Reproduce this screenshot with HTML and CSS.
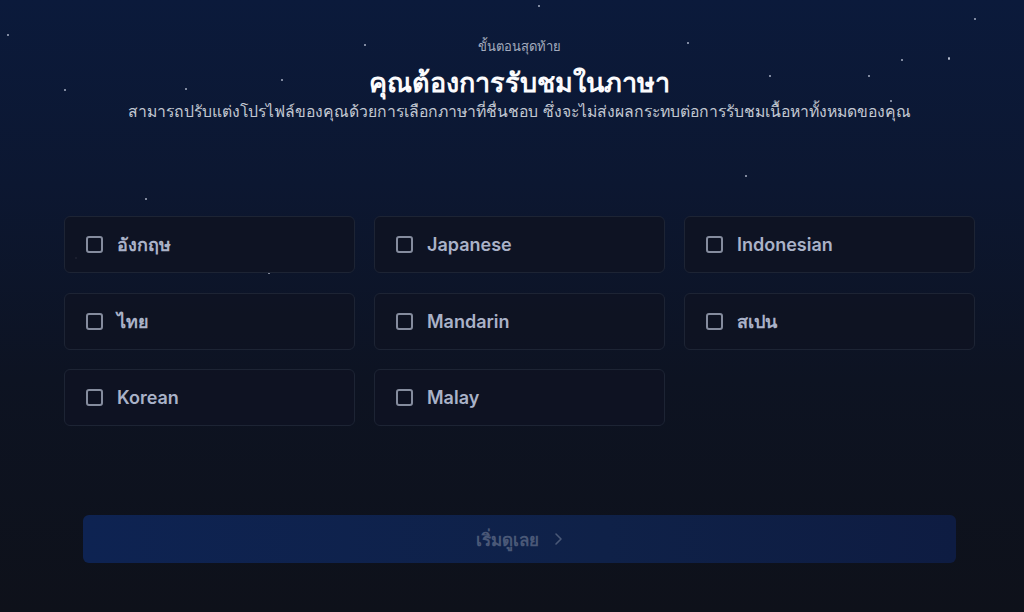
FILE: index.html
```html
<!DOCTYPE html>
<html lang="th">
<head>
    <meta charset="UTF-8">
    <meta name="viewport" content="width=device-width, initial-scale=1.0">
    <title>เลือกภาษา</title>
    <link rel="stylesheet" href="styles.css">
</head>
<body>
    <div class="stars">
        <span class="star" style="left:7px;top:34px"></span>
        <span class="star" style="left:538px;top:5px"></span>
        <span class="star" style="left:974px;top:18px"></span>
        <span class="star" style="left:687px;top:42px"></span>
        <span class="star" style="left:364px;top:44px"></span>
        <span class="star" style="left:948px;top:57px"></span>
        <span class="star" style="left:64px;top:89px"></span>
        <span class="star" style="left:185px;top:88px"></span>
        <span class="star" style="left:281px;top:79px"></span>
        <span class="star" style="left:901px;top:59px"></span>
        <span class="star" style="left:868px;top:75px"></span>
        <span class="star" style="left:948px;top:58px"></span>
        <span class="star" style="left:769px;top:75px"></span>
        <span class="star" style="left:890px;top:100px"></span>
        <span class="star" style="left:745px;top:175px"></span>
        <span class="star" style="left:145px;top:198px"></span>
        <span class="star" style="left:75px;top:257px"></span>
        <span class="star" style="left:268px;top:272px"></span>
    </div>

    <main class="page">
        <header class="intro">
            <div class="step">ขั้นตอนสุดท้าย</div>
            <h1>คุณต้องการรับชมในภาษา</h1>
            <p class="subtitle">สามารถปรับแต่งโปรไฟล์ของคุณด้วยการเลือกภาษาที่ชื่นชอบ ซึ่งจะไม่ส่งผลกระทบต่อการรับชมเนื้อหาทั้งหมดของคุณ</p>
        </header>

        <div class="lang-grid">
            <label class="lang"><input type="checkbox"><span class="box"></span><span>อังกฤษ</span></label>
            <label class="lang"><input type="checkbox"><span class="box"></span><span>Japanese</span></label>
            <label class="lang"><input type="checkbox"><span class="box"></span><span>Indonesian</span></label>
            <label class="lang"><input type="checkbox"><span class="box"></span><span>ไทย</span></label>
            <label class="lang"><input type="checkbox"><span class="box"></span><span>Mandarin</span></label>
            <label class="lang"><input type="checkbox"><span class="box"></span><span>สเปน</span></label>
            <label class="lang"><input type="checkbox"><span class="box"></span><span>Korean</span></label>
            <label class="lang"><input type="checkbox"><span class="box"></span><span>Malay</span></label>
        </div>

        <button class="start" disabled>
            เริ่มดูเลย
            <svg width="10" height="14" viewBox="0 0 10 14" fill="none" stroke="currentColor" stroke-width="1.6" stroke-linecap="round" stroke-linejoin="round"><path d="M3 2l5 5-5 5"/></svg>
        </button>
    </main>
</body>
</html>
```

FILE: styles.css
```css
* {
    margin: 0;
    padding: 0;
    box-sizing: border-box;
}

body {
    width: 1024px;
    height: 612px;
    overflow: hidden;
    position: relative;
    font-family: Inter, "Noto Sans", "DejaVu Sans", sans-serif;
    background: linear-gradient(180deg, #0b1a3b 0%, #0c1731 30%, #0d1322 62%, #0e111a 100%);
    color: #fff;
}

.stars {
    position: absolute;
    inset: 0;
    pointer-events: none;
}

.star {
    position: absolute;
    width: 2px;
    height: 2px;
    border-radius: 50%;
    background: rgba(220, 226, 240, 0.75);
}

.page {
    position: relative;
    padding: 36px 49px 0 64px;
}

.intro {
    text-align: center;
    width: 911px;
}

.step {
    font-size: 13px;
    color: #a3abbd;
    line-height: 20px;
}

h1 {
    margin-top: 12px;
    font-size: 27px;
    font-weight: 700;
    line-height: 30px;
    color: #fbfbfd;
}

.subtitle {
    margin-top: 3px;
    font-size: 15.75px;
    color: #c3c8d2;
    line-height: 22px;
    white-space: nowrap;
}

.lang-grid {
    margin-top: 93px;
    width: 911px;
    display: grid;
    grid-template-columns: repeat(3, 1fr);
    column-gap: 19px;
    row-gap: 19.5px;
}

.lang {
    height: 57px;
    display: flex;
    align-items: center;
    gap: 14px;
    padding-left: 21px;
    background: rgba(14, 19, 34, 0.9);
    border: 1px solid #1d2434;
    border-radius: 6px;
    font-size: 18px;
    font-weight: 600;
    color: #aab2c8;
    cursor: pointer;
}

.lang input {
    display: none;
}

.box {
    width: 17px;
    height: 17px;
    border: 2px solid #858c9e;
    border-radius: 3px;
}

.lang input:checked + .box {
    background: #3b6fe0;
    border-color: #3b6fe0;
}

.start {
    margin: 89px 0 0 19px;
    width: 873px;
    height: 48px;
    border: none;
    border-radius: 6px;
    background: linear-gradient(90deg, #0e2352 0%, #0f2148 60%, #0e1c42 100%);
    color: #4a5877;
    font-family: inherit;
    font-size: 17px;
    font-weight: 600;
    display: flex;
    align-items: center;
    justify-content: center;
    gap: 14px;
}
```
